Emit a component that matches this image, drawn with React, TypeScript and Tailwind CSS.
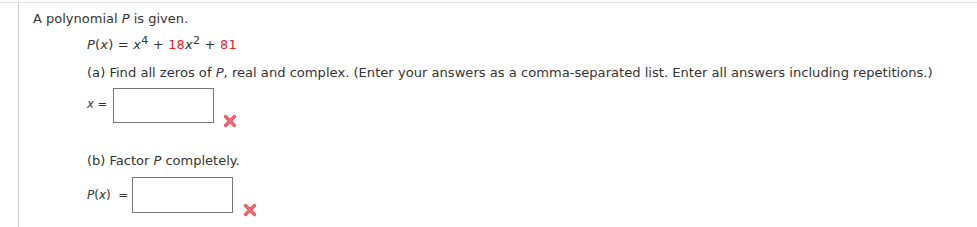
import React from "react";

function XMark() {
  return (
    <svg width="14" height="14" viewBox="0 0 14 14" className="block">
      <path d="M2.5 2.5 L11.5 11.5 M11.5 2.5 L2.5 11.5" stroke="#f0505c" strokeWidth="3.2" strokeLinecap="round" />
      <path d="M2.5 2.5 L11.5 11.5 M11.5 2.5 L2.5 11.5" stroke="#f7838b" strokeWidth="1" strokeLinecap="round" />
    </svg>
  );
}

export default function App() {
  return (
    <div className="w-[977px] h-[227px] bg-white overflow-hidden pt-[2px] text-[#333]" style={{ fontFamily: '"DejaVu Sans", Verdana, sans-serif' }}>
      <div className="border-t border-[#ddd] h-full">
        <div className="ml-[18px] border-l border-[#ccc] h-full pl-[14px] pt-[7px]">
          <div className="text-[13px] leading-[18px]">
            A polynomial <i>P</i> is given.
          </div>
          <div className="pl-[54px]">
            <div className="mt-[8px] text-[13px] leading-[18px] tracking-[0.2px]">
              <i>P</i>(<i>x</i>) = <i>x</i><sup className="text-[11px]">4</sup> + <span className="text-[#ee1c2a]">18</span><i>x</i><sup className="text-[11px]">2</sup> + <span className="text-[#ee1c2a]">81</span>
            </div>
            <div className="mt-[10px] text-[13.1px] leading-[18px]">
              (a) Find all zeros of <i>P</i>, real and complex. (Enter your answers as a comma-separated list. Enter all answers including repetitions.)
            </div>
            <div className="mt-[6px] flex items-start">
              <div className="flex items-center h-[34px] text-[11.5px] mr-[6px]">
                <i>x</i>&nbsp;=
              </div>
              <div className="w-[101px] h-[35px] border border-[#777] bg-white" />
              <div className="ml-[9px] mt-[26px]">
                <XMark />
              </div>
            </div>
            <div className="mt-[24px] text-[13px] leading-[18px]">
              (b) Factor <i>P</i> completely.
            </div>
            <div className="mt-[7px] flex items-start">
              <div className="flex items-center h-[35px] text-[12px] mr-[4px]">
                <i>P</i>(<i>x</i>)&nbsp;&nbsp;=
              </div>
              <div className="w-[101px] h-[36px] border border-[#777] bg-white" />
              <div className="ml-[10px] mt-[26px]">
                <XMark />
              </div>
            </div>
          </div>
        </div>
      </div>
    </div>
  );
}
